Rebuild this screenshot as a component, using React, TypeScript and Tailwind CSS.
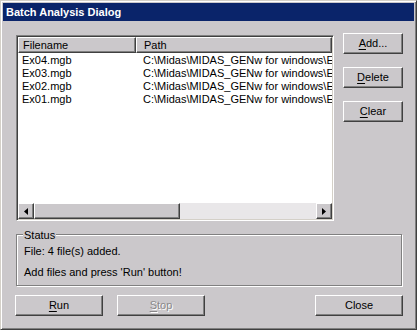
const FONT = "font-['Liberation_Sans',Arial,sans-serif]"

const raised =
  'border border-t-white border-l-white border-r-[#404040] border-b-[#404040] shadow-[inset_-1px_-1px_#808080]'

const files = [
  { name: 'Ex04.mgb', path: 'C:\\Midas\\MIDAS_GENw for windows\\Examples\\Ex04.mgb' },
  { name: 'Ex03.mgb', path: 'C:\\Midas\\MIDAS_GENw for windows\\Examples\\Ex03.mgb' },
  { name: 'Ex02.mgb', path: 'C:\\Midas\\MIDAS_GENw for windows\\Examples\\Ex02.mgb' },
  { name: 'Ex01.mgb', path: 'C:\\Midas\\MIDAS_GENw for windows\\Examples\\Ex01.mgb' },
]

const Btn = ({
  hot,
  rest,
  disabled,
  className = '',
}: {
  hot?: string
  rest: string
  disabled?: boolean
  className?: string
}) => (
  <button
    className={`${raised} bg-[#cbc8cb] h-[21px] flex items-center justify-center text-[11px] ${
      disabled ? 'text-[#8a888a] [text-shadow:1px_1px_0_#fff]' : 'text-black'
    } ${className}`}
  >
    {hot && <span className="underline underline-offset-[2px]">{hot}</span>}
    {rest}
  </button>
)

const Arrow = ({ dir }: { dir: 'left' | 'right' }) => (
  <div className={`${raised} bg-[#cbc8cb] w-[16px] h-[16px] flex items-center justify-center`}>
    <svg width="4" height="7" viewBox="0 0 4 7">
      {dir === 'left' ? <path d="M4 0 L0 3.5 L4 7 Z" fill="#000" /> : <path d="M0 0 L4 3.5 L0 7 Z" fill="#000" />}
    </svg>
  </div>
)

export default function App() {
  return (
    <div
      className={`${FONT} w-[417px] h-[330px] bg-[#cbc8cb] border border-t-[#d4d0c8] border-l-[#d4d0c8] border-r-[#404040] border-b-[#404040] shadow-[inset_1px_1px_#fff,inset_-1px_-1px_#808080] p-[2px] flex flex-col select-none`}
    >
      <div className="h-[18px] bg-[#0a246a] flex items-center pl-[3px] text-white text-[11px] font-bold">
        Batch Analysis Dialog
      </div>

      <div className="flex flex-col flex-1">
        <div className="flex pl-[13px] pt-[12px]">
          {/* list view */}
          <div className="mt-[2px] w-[318px] h-[186px] bg-white border border-t-[#808080] border-l-[#808080] border-r-white border-b-white shadow-[inset_1px_1px_#404040,inset_-1px_-1px_#d4d0c8] p-[1px] flex flex-col">
            <div className="h-[16px] flex text-[11px] text-black">
              <div className={`${raised} bg-[#cbc8cb] w-[118px] pl-[4px] flex items-center`}>Filename</div>
              <div className={`${raised} bg-[#cbc8cb] flex-1 pl-[7px] flex items-center`}>Path</div>
            </div>
            <div className="flex-1 overflow-hidden pt-[1px]">
              {files.map((f) => (
                <div key={f.name} className="flex h-[13px] items-center text-[11px] text-black leading-[13px]">
                  <div className="w-[118px] pl-[4px] shrink-0">{f.name}</div>
                  <div className="pl-[7px] whitespace-nowrap overflow-hidden">{f.path}</div>
                </div>
              ))}
            </div>
            <div className="h-[16px] flex">
              <Arrow dir="left" />
              <div className={`${raised} bg-[#cbc8cb] w-[146px] h-[16px]`} />
              <div className="flex-1 bg-[#e9e7e9]" />
              <Arrow dir="right" />
            </div>
          </div>

          <div className="ml-[9px] w-[60px] flex flex-col gap-[13px]">
            <Btn hot="A" rest="dd..." />
            <Btn hot="D" rest="elete" />
            <Btn hot="C" rest="lear" />
          </div>
        </div>

        {/* status group */}
        <div className="relative ml-[13px] mt-[13px] w-[386px] h-[52px] border border-[#808080] shadow-[inset_1px_1px_#fff,1px_1px_#fff] pl-[7px] pt-[10px] text-[11px] text-black">
          <div className="absolute left-[6px] -top-[8px] px-[1px] bg-[#cbc8cb]">Status</div>
          <div className="leading-[13px]">File: 4 file(s) added.</div>
          <div className="leading-[13px] mt-[8px]">Add files and press 'Run' button!</div>
        </div>

        <div className="flex pl-[12px] mt-[9px]">
          <Btn hot="R" rest="un" className="w-[88px]" />
          <Btn hot="S" rest="top" disabled className="w-[88px] ml-[14px]" />
          <Btn rest="Close" className="w-[88px] ml-[110px]" />
        </div>
      </div>
    </div>
  )
}
